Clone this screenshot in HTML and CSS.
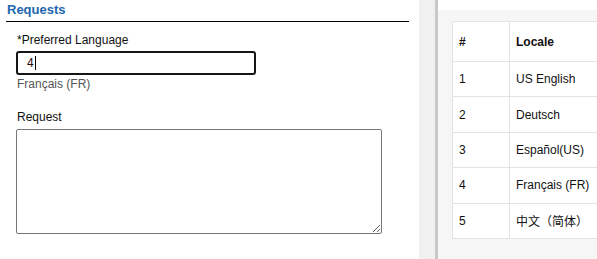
FILE: index.html
```html
<!DOCTYPE html>
<html lang="en">

<head>
    <meta charset="utf-8">
    <meta name="viewport" content="width=device-width, initial-scale=1.0">
    <title>Requests</title>
    <link rel="stylesheet" href="styles.css">
</head>

<body>

    <div class="side">
        <h2 class="titel">Requests</h2>

        <div class="felt">
            <label for="sprog">*Preferred Language</label>
            <div class="inputramme"><span class="vaerdi">4</span><span class="markor"></span></div>
            <p class="hjaelp">Français (FR)</p>
        </div>

        <div class="felt">
            <label for="besked">Request</label>
            <textarea id="besked"></textarea>
        </div>
    </div>

    <div class="skille"></div>

    <div class="panel">
        <table class="liste">
            <tr>
                <th class="nr">#</th>
                <th>Locale</th>
            </tr>
            <tr>
                <td class="nr">1</td>
                <td>US English</td>
            </tr>
            <tr>
                <td class="nr">2</td>
                <td>Deutsch</td>
            </tr>
            <tr>
                <td class="nr">3</td>
                <td>Español(US)</td>
            </tr>
            <tr>
                <td class="nr">4</td>
                <td>Français (FR)</td>
            </tr>
            <tr>
                <td class="nr">5</td>
                <td>中文（简体）</td>
            </tr>
        </table>
    </div>

</body>

</html>
```

FILE: styles.css
```css
* {
    box-sizing: border-box;
    padding: 0;
    margin: 0;
}

body {
    background: white;
    display: flex;
    height: 259px;
    overflow: hidden;
    font-family: "Liberation Sans", "Noto Sans CJK SC", sans-serif;
    font-size: 12px;
    color: #111;
}

.side {
    width: 419px;
    flex: none;
    padding: 0 10px 0 6px;
}

.titel {
    color: #2266ad;
    font-size: 13px;
    font-weight: bold;
    padding: 4px 0 5px 1px;
    border-bottom: 1px solid #000;
    line-height: 12px;
}

.felt {
    margin-left: 10px;
}

.felt label {
    display: block;
    padding-left: 1px;
    margin-top: 11px;
    height: 18px;
    line-height: 14px;
}

.inputramme {
    width: 240px;
    height: 24px;
    border: 2px solid #161616;
    border-radius: 3px;
    padding-left: 9px;
    display: flex;
    align-items: center;
}

.vaerdi {
    color: #2a0a0a;
}

.markor {
    width: 1px;
    height: 14px;
    background: #000;
    margin-left: 1px;
}

.hjaelp {
    color: #555;
    padding-left: 1px;
    line-height: 18px;
    margin-bottom: 17px;
}

textarea {
    display: block;
    width: 366px;
    height: 105px;
    margin-top: 1px;
    border: 1px solid #767676;
    border-radius: 2px;
    resize: vertical;
    font-family: inherit;
}

.skille {
    width: 19px;
    flex: none;
    background: #f0f0f0;
    border-right: 3px solid #c8c8c8;
}

.panel {
    flex: 1;
    background: #f6f6f6;
    border-top: 10px solid white;
    padding: 11px 0 0 14px;
    overflow: hidden;
}

.liste {
    border-collapse: collapse;
    background: white;
    width: 300px;
}

.liste th,
.liste td {
    border: 1px solid #e3e3e3;
    text-align: left;
    padding: 0 6px;
    height: 35.4px;
    font-size: 12px;
}

.liste th {
    height: 40px;
}

.liste .nr {
    width: 57px;
}
```
